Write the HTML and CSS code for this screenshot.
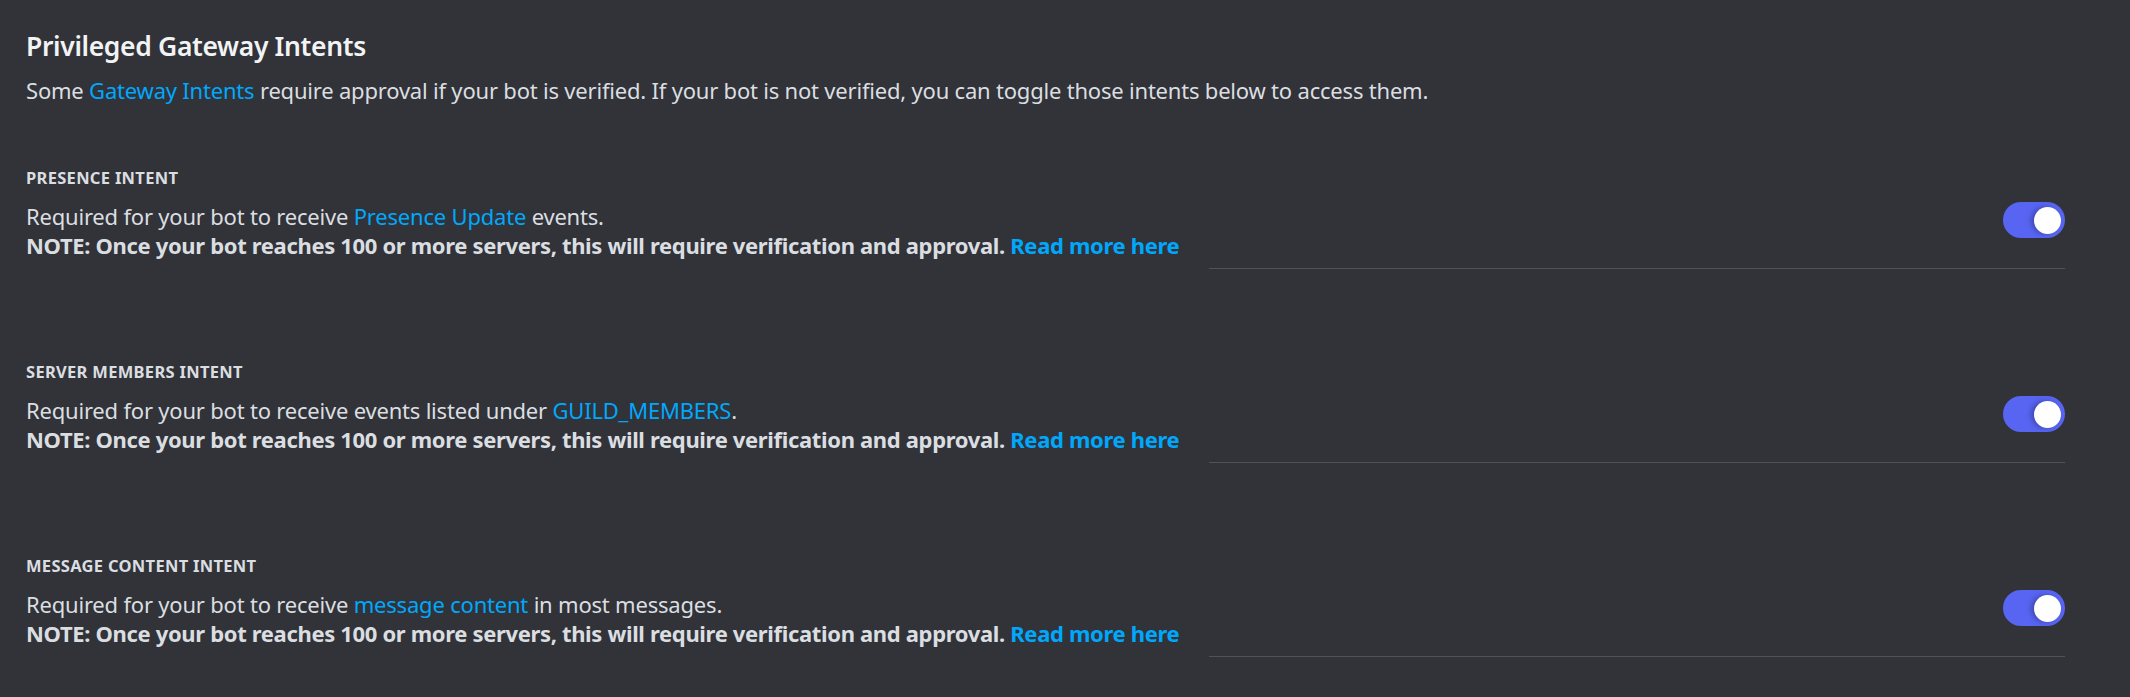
FILE: index.html
```html
<!DOCTYPE html>
<html>
<head>
<meta charset="utf-8">
<title>Privileged Gateway Intents</title>
<link rel="stylesheet" href="styles.css">
</head>
<body>
<main class="page">
  <h1 class="title">Privileged Gateway Intents</h1>
  <p class="subtitle">Some <a class="link" href="#">Gateway Intents</a> require approval if your bot is verified. If your bot is not verified, you can toggle those intents below to access them.</p>

  <section class="intent">
    <h2 class="label">PRESENCE INTENT</h2>
    <div class="row">
      <div class="text">
        <p class="desc">Required for your bot to receive <a class="link" href="#">Presence Update</a> events.</p>
        <p class="note">NOTE: Once your bot reaches 100 or more servers, this will require verification and approval. <a class="link" href="#">Read more here</a></p>
      </div>
      <div class="toggle"><span class="knob"></span></div>
    </div>
    <div class="divider"></div>
  </section>

  <section class="intent">
    <h2 class="label">SERVER MEMBERS INTENT</h2>
    <div class="row">
      <div class="text">
        <p class="desc">Required for your bot to receive events listed under <a class="link" href="#">GUILD_MEMBERS</a>.</p>
        <p class="note">NOTE: Once your bot reaches 100 or more servers, this will require verification and approval. <a class="link" href="#">Read more here</a></p>
      </div>
      <div class="toggle"><span class="knob"></span></div>
    </div>
    <div class="divider"></div>
  </section>

  <section class="intent">
    <h2 class="label">MESSAGE CONTENT INTENT</h2>
    <div class="row">
      <div class="text">
        <p class="desc">Required for your bot to receive <a class="link" href="#">message content</a> in most messages.</p>
        <p class="note">NOTE: Once your bot reaches 100 or more servers, this will require verification and approval. <a class="link" href="#">Read more here</a></p>
      </div>
      <div class="toggle"><span class="knob"></span></div>
    </div>
    <div class="divider"></div>
  </section>
</main>
</body>
</html>
```
FILE: styles.css
```css
html, body {
  margin: 0;
  background: #313338;
}
body {
  font-family: "Noto Sans", "Open Sans", sans-serif;
  color: #dbdee1;
}
.page {
  padding: 29px 65px 0 26px;
}
.title {
  margin: 0;
  font-size: 26.5px;
  line-height: 34px;
  font-weight: 600;
  color: #f2f3f5;
  letter-spacing: -0.35px;
}
.subtitle {
  margin: 13px 0 0;
  font-size: 22px;
  line-height: 29px;
  letter-spacing: -0.2px;
  color: #dbdee1;
  white-space: nowrap;
}
.link {
  color: #00a8fc;
  text-decoration: none;
}
.intent {
  margin-top: 63px;
}
.intent + .intent {
  margin-top: 93px;
}
.label {
  margin: 0 0 14px;
  font-size: 16.5px;
  line-height: 20px;
  font-weight: 700;
  color: #dbdee1;
  letter-spacing: 0.3px;
}
.row {
  display: flex;
  justify-content: space-between;
  align-items: flex-start;
}
.text {
  white-space: nowrap;
}
.desc {
  margin: 0;
  font-size: 22px;
  line-height: 29px;
  letter-spacing: -0.2px;
}
.note {
  margin: 0;
  font-size: 22px;
  line-height: 29px;
  font-weight: 700;
  letter-spacing: -0.34px;
}
.toggle {
  width: 62px;
  height: 36px;
  border-radius: 18px;
  background: #5865f2;
  display: flex;
  align-items: center;
  justify-content: flex-end;
  padding-right: 4px;
  box-sizing: border-box;
  flex: none;
}
.knob {
  width: 27px;
  height: 27px;
  border-radius: 50%;
  background: #ffffff;
  box-shadow: -3px 0 5px rgba(20, 20, 60, 0.35);
}
.divider {
  margin: 8px 0 0 1183px;
  height: 1px;
  background: #505259;
}
```
